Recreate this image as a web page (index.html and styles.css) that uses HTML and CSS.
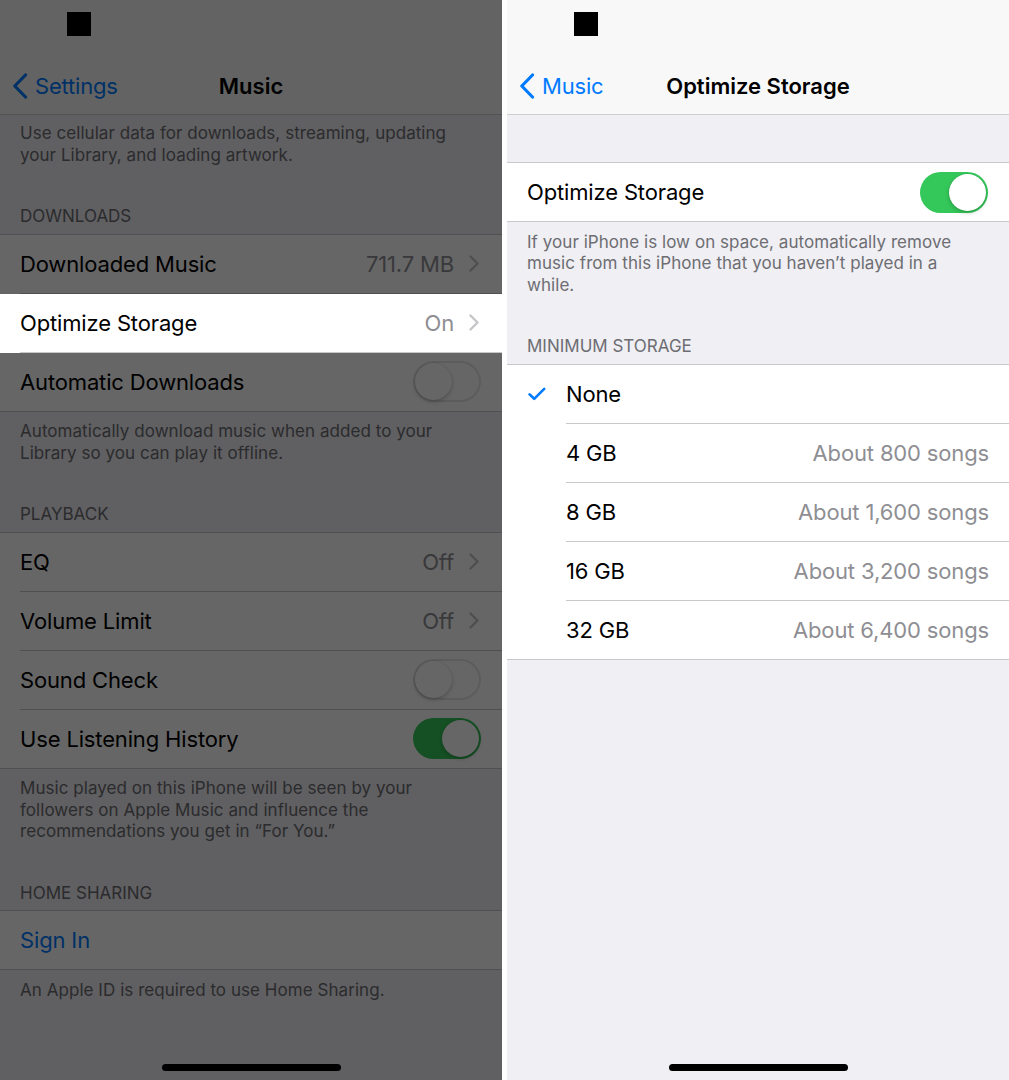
FILE: index.html
```html
<!DOCTYPE html>
<html lang="en">
<head>
<meta charset="utf-8">
<title>Music – Optimize Storage</title>
<link rel="stylesheet" href="styles.css">
</head>
<body>
<div class="screens">
  <section class="phone dimmed">
    <div class="status"><span class="time-block"></span></div>
    <header class="nav">
      <a class="back"><svg class="back-chev" viewBox="0 0 16 26" width="16" height="26"><path d="M13.5 2 L2.8 13 L13.5 24"/></svg><span>Settings</span></a>
      <h1 class="title">Music</h1>
      <span></span>
    </header>
    <div class="content">
      <p class="footer first">Use cellular data for downloads, streaming, updating<br>your Library, and loading artwork.</p>
      <h2 class="header">Downloads</h2>
      <ul class="group">
        <li class="row"><div class="row-body"><span class="label">Downloaded Music</span><span class="value">711.7 MB</span><svg class="chev" viewBox="0 0 10 17" width="10" height="17"><path d="M1.5 1.5 L8.5 8.5 L1.5 15.5"/></svg></div></li>
        <li class="row highlight"><div class="row-body"><span class="label">Optimize Storage</span><span class="value">On</span><svg class="chev" viewBox="0 0 10 17" width="10" height="17"><path d="M1.5 1.5 L8.5 8.5 L1.5 15.5"/></svg></div></li>
        <li class="row"><div class="row-body"><span class="label">Automatic Downloads</span><span class="switch"><span class="knob"></span></span></div></li>
      </ul>
      <p class="footer">Automatically download music when added to your<br>Library so you can play it offline.</p>
      <h2 class="header">Playback</h2>
      <ul class="group">
        <li class="row"><div class="row-body"><span class="label">EQ</span><span class="value">Off</span><svg class="chev" viewBox="0 0 10 17" width="10" height="17"><path d="M1.5 1.5 L8.5 8.5 L1.5 15.5"/></svg></div></li>
        <li class="row"><div class="row-body"><span class="label">Volume Limit</span><span class="value">Off</span><svg class="chev" viewBox="0 0 10 17" width="10" height="17"><path d="M1.5 1.5 L8.5 8.5 L1.5 15.5"/></svg></div></li>
        <li class="row"><div class="row-body"><span class="label">Sound Check</span><span class="switch"><span class="knob"></span></span></div></li>
        <li class="row"><div class="row-body"><span class="label">Use Listening History</span><span class="switch on"><span class="knob"></span></span></div></li>
      </ul>
      <p class="footer">Music played on this iPhone will be seen by your<br>followers on Apple Music and influence the<br>recommendations you get in “For You.”</p>
      <h2 class="header">Home Sharing</h2>
      <ul class="group">
        <li class="row"><div class="row-body"><span class="label link">Sign In</span></div></li>
      </ul>
      <p class="footer">An Apple ID is required to use Home Sharing.</p>
    </div>
    <div class="home-indicator"></div>
    <div class="dim-overlay"></div>
  </section>

  <section class="phone">
    <div class="status"><span class="time-block"></span></div>
    <header class="nav">
      <a class="back"><svg class="back-chev" viewBox="0 0 16 26" width="16" height="26"><path d="M13.5 2 L2.8 13 L13.5 24"/></svg><span>Music</span></a>
      <h1 class="title">Optimize Storage</h1>
      <span></span>
    </header>
    <div class="content">
      <ul class="group spaced">
        <li class="row"><div class="row-body"><span class="label">Optimize Storage</span><span class="switch on"><span class="knob"></span></span></div></li>
      </ul>
      <p class="footer">If your iPhone is low on space, automatically remove<br>music from this iPhone that you haven’t played in a<br>while.</p>
      <h2 class="header">Minimum Storage</h2>
      <ul class="group">
        <li class="row"><span class="check"><svg viewBox="0 0 18 14" width="18" height="14"><path d="M1.6 7.4 L6.2 11.8 L16.2 1.8"/></svg></span><div class="row-body"><span class="label">None</span></div></li>
        <li class="row"><span class="check"></span><div class="row-body"><span class="label">4 GB</span><span class="value">About 800 songs</span></div></li>
        <li class="row"><span class="check"></span><div class="row-body"><span class="label">8 GB</span><span class="value">About 1,600 songs</span></div></li>
        <li class="row"><span class="check"></span><div class="row-body"><span class="label">16 GB</span><span class="value">About 3,200 songs</span></div></li>
        <li class="row"><span class="check"></span><div class="row-body"><span class="label">32 GB</span><span class="value">About 6,400 songs</span></div></li>
      </ul>
    </div>
    <div class="home-indicator"></div>
  </section>
</div>
</body>
</html>
```

FILE: styles.css
```css
* { box-sizing: border-box; }

html, body {
  margin: 0;
  padding: 0;
  background: #ffffff;
}

body {
  font-family: "Inter", "Roboto", "Liberation Sans", sans-serif;
  color: #000;
  -webkit-font-smoothing: antialiased;
}

.screens {
  display: flex;
  gap: 5px;
  width: 1009px;
  height: 1080px;
}

.phone {
  position: relative;
  width: 502px;
  height: 1080px;
  background: #efeff4;
  overflow: hidden;
  display: flex;
  flex-direction: column;
}

/* status bar */
.status {
  height: 57px;
  background: #f8f8f8;
  padding: 12px 0 0 67px;
}
.time-block {
  display: block;
  width: 24px;
  height: 24px;
  background: #000;
}

/* navigation bar */
.nav {
  height: 58px;
  background: #f8f8f8;
  border-bottom: 1px solid #cfcfd3;
  display: grid;
  grid-template-columns: 1fr auto 1fr;
  align-items: center;
}
.back {
  display: flex;
  align-items: center;
  gap: 7px;
  padding-left: 12px;
  color: #007aff;
  font-size: 22px;
  letter-spacing: -0.2px;
  text-decoration: none;
}
.back-chev {
  fill: none;
  stroke: #007aff;
  stroke-width: 3.2;
  stroke-linecap: round;
  stroke-linejoin: round;
}
.title {
  margin: 0;
  font-size: 22px;
  font-weight: 600;
  letter-spacing: 0;
  white-space: nowrap;
}

/* content */
.content {
  display: flex;
  flex-direction: column;
}

.footer {
  margin: 0;
  padding: 9.5px 20px 0;
  font-size: 17px;
  line-height: 21.5px;
  color: #6d6d72;
  letter-spacing: 0.05px;
}
.footer.first { padding-top: 8px; }

.header {
  margin: 0;
  padding: 40px 20px 6px;
  font-size: 17px;
  line-height: 21.5px;
  font-weight: 400;
  text-transform: uppercase;
  color: #6d6d72;
  letter-spacing: 0;
}

.group {
  list-style: none;
  margin: 0;
  padding: 0;
  background: #fff;
  border-top: 1px solid #c8c7cc;
  border-bottom: 1px solid #c8c7cc;
}
.group.spaced { margin-top: 47px; }

.row {
  display: flex;
  align-items: stretch;
  padding-left: 20px;
  background: #fff;
}
.row-body {
  flex: 1;
  height: 59px;
  display: flex;
  align-items: center;
  padding-right: 20px;
  border-bottom: 1px solid #c8c7cc;
}
.row:last-child .row-body { border-bottom: none; height: 58px; }

.label {
  flex: 1;
  font-size: 22px;
  letter-spacing: -0.15px;
  white-space: nowrap;
}
.label.link { color: #007aff; }

.value {
  font-size: 22px;
  letter-spacing: -0.15px;
  color: #8e8e93;
  white-space: nowrap;
}
.value + .chev { margin-left: 15px; }
.chev {
  margin-right: 3px;
  fill: none;
  stroke: #c4c4c9;
  stroke-width: 2.4;
  stroke-linecap: round;
  stroke-linejoin: round;
}

.check {
  width: 39px;
  flex: none;
  display: flex;
  align-items: center;
  padding-left: 1px;
}
.check svg {
  fill: none;
  stroke: #007aff;
  stroke-width: 2.6;
  stroke-linecap: round;
  stroke-linejoin: round;
}

/* switches */
.switch {
  width: 68px;
  height: 41px;
  border-radius: 21px;
  background: #fff;
  box-shadow: inset 0 0 0 2px #e5e5ea;
  display: flex;
  align-items: center;
  justify-content: flex-start;
  padding: 2px;
  margin-right: 1px;
}
.switch.on {
  background: #34c759;
  box-shadow: none;
  justify-content: flex-end;
}
.knob {
  width: 37px;
  height: 37px;
  border-radius: 50%;
  background: #fff;
  box-shadow: 0 2px 4px rgba(0,0,0,0.2), 0 0 0 0.5px rgba(0,0,0,0.08);
}

/* home indicator */
.home-indicator {
  margin-top: auto;
  align-self: center;
  width: 179px;
  height: 7px;
  border-radius: 4px;
  background: #000;
  margin-bottom: 9px;
}

/* dim layer on the left screen */
.dim-overlay {
  position: absolute;
  inset: 0;
  background: rgba(0, 0, 0, 0.6);
  z-index: 1;
  pointer-events: none;
}
.row.highlight {
  position: relative;
  z-index: 2;
}
```
